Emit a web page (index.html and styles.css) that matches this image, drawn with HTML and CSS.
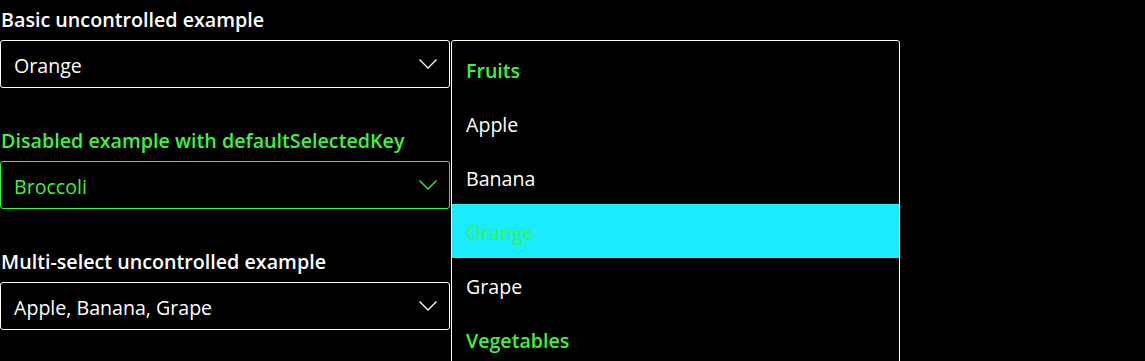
FILE: index.html
```html
<!DOCTYPE html>
<html lang="en">
<head>
<meta charset="utf-8">
<title>Dropdown examples</title>
<link rel="stylesheet" href="styles.css">
</head>
<body>
<div class="page">
  <div class="field">
    <label class="label">Basic uncontrolled example</label>
    <div class="dropdown">
      <span class="value">Orange</span>
      <svg class="chevron" viewBox="0 0 18 10" width="18" height="10"><polyline points="0.5,0.5 9,9 17.5,0.5" fill="none" stroke="currentColor" stroke-width="1.3"/></svg>
    </div>
  </div>
  <div class="field disabled">
    <label class="label">Disabled example with defaultSelectedKey</label>
    <div class="dropdown">
      <span class="value">Broccoli</span>
      <svg class="chevron" viewBox="0 0 18 10" width="18" height="10"><polyline points="0.5,0.5 9,9 17.5,0.5" fill="none" stroke="currentColor" stroke-width="1.3"/></svg>
    </div>
  </div>
  <div class="field">
    <label class="label">Multi-select uncontrolled example</label>
    <div class="dropdown">
      <span class="value">Apple, Banana, Grape</span>
      <svg class="chevron" viewBox="0 0 18 10" width="18" height="10"><polyline points="0.5,0.5 9,9 17.5,0.5" fill="none" stroke="currentColor" stroke-width="1.3"/></svg>
    </div>
  </div>
</div>
<div class="callout">
  <div class="option header"><span>Fruits</span></div>
  <div class="option"><span>Apple</span></div>
  <div class="option"><span>Banana</span></div>
  <div class="option selected"><span>Orange</span></div>
  <div class="option"><span>Grape</span></div>
  <div class="option header"><span>Vegetables</span></div>
</div>
</body>
</html>
```
FILE: styles.css
```css
html, body {
  margin: 0;
  padding: 0;
  background: #000;
  height: 100%;
  overflow: hidden;
}
body {
  position: relative;
  font-family: "Open Sans", "Noto Sans", "Liberation Sans", sans-serif;
  color: #fff;
}
.page {
  width: 450px;
  display: flex;
  flex-direction: column;
  gap: 33px;
}
.field {
  display: flex;
  flex-direction: column;
}
.label {
  display: block;
  height: 40px;
  line-height: 40px;
  font-size: 19.7px;
  font-weight: 600;
  padding-left: 1px;
}
.dropdown {
  box-sizing: border-box;
  height: 48px;
  border: 1px solid #fff;
  border-radius: 3px;
  display: flex;
  align-items: center;
  justify-content: space-between;
  padding: 0 12px 0 13px;
  font-size: 19.6px;
}
.value {
  padding-top: 3px;
}
.chevron {
  display: block;
  color: #fff;
  margin-top: -1px;
}
.disabled .label,
.disabled .dropdown,
.disabled .chevron {
  color: #3ff23f;
  border-color: #3ff23f;
}
.callout {
  position: absolute;
  left: 451px;
  top: 40px;
  width: 449px;
  box-sizing: border-box;
  border: 1px solid #fff;
  border-radius: 3px;
  padding: 1px 0 60px;
  background: #000;
}
.option {
  height: 54px;
  display: flex;
  align-items: center;
  padding: 3px 0 0 14px;
  box-sizing: border-box;
  font-size: 19.6px;
  color: #fff;
}
.option span {
  line-height: 1.2;
}
.option.header {
  color: #3ff23f;
  font-weight: 600;
}
.option.selected {
  background: #1aebff;
  color: #3ff23f;
}
```
